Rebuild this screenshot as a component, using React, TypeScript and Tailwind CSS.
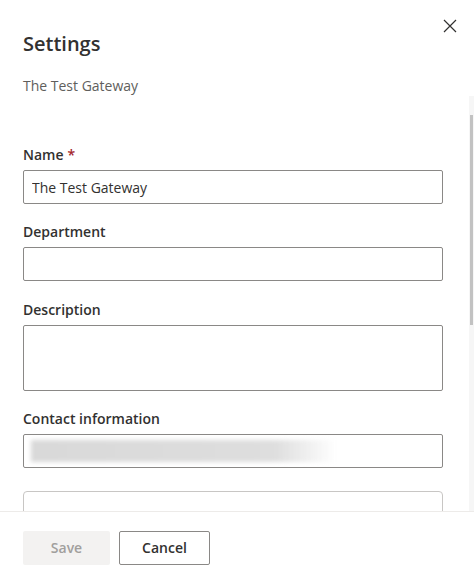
import React from 'react';

const Label: React.FC<{ text: string; required?: boolean }> = ({ text, required }) => (
  <label className="block py-[5px] text-sm font-semibold leading-5 text-[#323130]">
    {text}
    {required && <span className="pl-1 text-[#a4262c]">*</span>}
  </label>
);

const inputClass =
  'block h-[34px] w-full rounded-[2px] border border-[#8a8886] bg-white px-[8px] text-sm text-[#323130] outline-none';

export default function App() {
  return (
    <div className="flex h-[579px] w-[474px] flex-col bg-white font-['Open_Sans',sans-serif] text-[#323130]">
      <div className="relative px-[23px] pt-[30px]">
        <h1 className="text-[20px] font-semibold leading-[28px] text-[#323130]">Settings</h1>
        <button type="button" aria-label="Close" className="absolute right-[17px] top-[19px] h-[14px] w-[14px]">
          <svg viewBox="0 0 14 14" className="h-[14px] w-[14px]" fill="none" stroke="#323130" strokeWidth="1.2">
            <path d="M1 1 L13 13 M13 1 L1 13" />
          </svg>
        </button>
        <p className="mt-[18px] text-sm leading-5 text-[#605e5c]">The Test Gateway</p>
      </div>

      <div className="relative flex-1 overflow-hidden">
        <div className="pl-[23px] pr-[31px] pt-[44px]">
          <div>
            <Label text="Name" required />
            <input className={inputClass} defaultValue="The Test Gateway" />
          </div>
          <div className="mt-[13px]">
            <Label text="Department" />
            <input className={inputClass} />
          </div>
          <div className="mt-[14px]">
            <Label text="Description" />
            <textarea className="block h-[66px] w-full resize-none rounded-[2px] border border-[#8a8886] bg-white px-[8px] py-[6px] text-sm text-[#323130] outline-none" />
          </div>
          <div className="mt-[13px]">
            <Label text="Contact information" />
            <div className="relative h-[34px] w-full rounded-[2px] border border-[#8a8886] bg-white">
              <div className="absolute left-[7px] top-[5px] h-[22px] w-[305px] bg-gradient-to-r from-[#d9d9d9] via-[#dedede] via-80% to-transparent blur-[2px]" />
            </div>
          </div>
          <div className="mt-[23px] h-[34px] w-full rounded-[4px] border border-[#c8c6c4] bg-white" />
        </div>

        <div className="absolute right-0 top-0 h-full w-[5px] bg-[#f6f6f6]">
          <div className="absolute right-[1px] top-[19px] h-[210px] w-[3px] bg-[#c2c2c2]" />
        </div>
      </div>

      <div className="flex gap-[9px] border-t border-[#edebe9] px-[23px] pb-[14px] pt-[19px]">
        <button
          type="button"
          disabled
          className="h-[34px] w-[87px] rounded-[2px] bg-[#f3f2f1] text-sm font-semibold text-[#a19f9d]"
        >
          Save
        </button>
        <button
          type="button"
          className="h-[34px] w-[91px] rounded-[2px] border border-[#8a8886] bg-white text-sm font-semibold text-[#323130]"
        >
          Cancel
        </button>
      </div>
    </div>
  );
}
